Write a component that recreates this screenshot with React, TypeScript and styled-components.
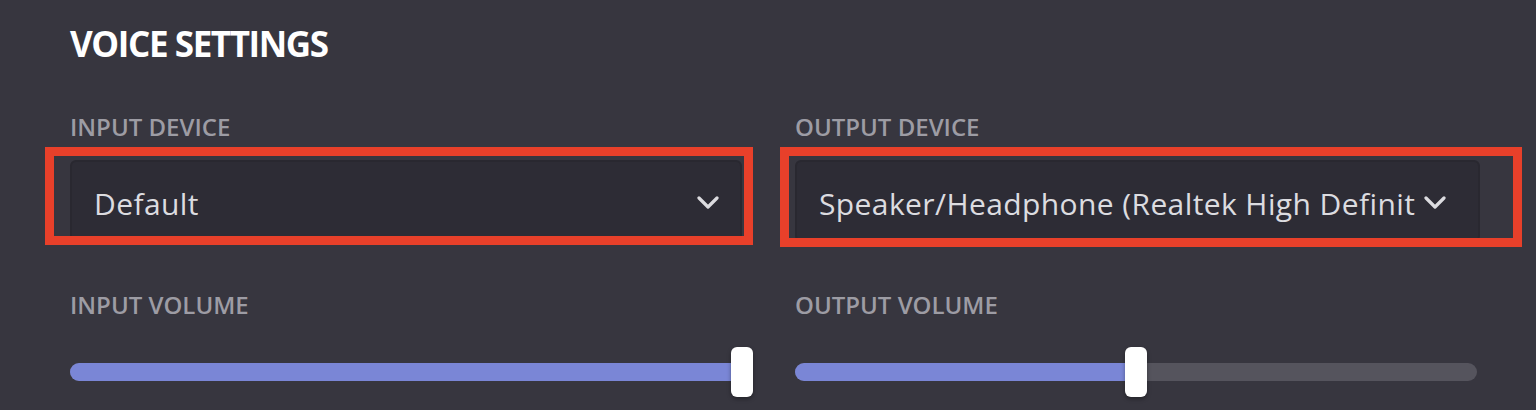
import React from "react";
import styled, { createGlobalStyle } from "styled-components";

const Global = createGlobalStyle`
  html, body { margin: 0; padding: 0; background: #37363f; }
  body { font-family: "Open Sans", "Noto Sans", sans-serif; overflow: hidden; }
`;

const Page = styled.div`
  width: 1536px;
  height: 410px;
  box-sizing: border-box;
  padding: 23px 0 0 70px;
  background: #37363f;
`;

const Heading = styled.h2`
  margin: 0;
  font-size: 35px;
  line-height: 42px;
  font-weight: 700;
  color: #ffffff;
  letter-spacing: -1.4px;
`;

const Grid = styled.div`
  margin-top: 47px;
  display: grid;
  grid-template-columns: 672px 685px;
  column-gap: 53px;
`;

const Column = styled.div`
  display: flex;
  flex-direction: column;
`;

const Label = styled.div<{ $gap?: number }>`
  font-size: 24px;
  line-height: 30px;
  font-weight: 600;
  color: #9d9ca4;
  text-transform: uppercase;
  letter-spacing: 0;
  margin-top: ${(p) => p.$gap ?? 0}px;
`;

const SelectWrap = styled.div`
  position: relative;
  margin-top: 18px;
`;

const Select = styled.div`
  height: 82px;
  box-sizing: border-box;
  display: flex;
  align-items: center;
  gap: 8px;
  padding: 4px 20px 0 22px;
  background: #2d2c35;
  border: 2px solid #292830;
  border-radius: 6px;
  color: #dcdce0;
  font-size: 30px;
  letter-spacing: 0.4px;
`;

const SelectText = styled.span<{ $grow?: boolean }>`
  flex: ${(p) => (p.$grow ? "1" : "0 1 auto")};
  min-width: 0;
  white-space: nowrap;
`;

const Highlight = styled.div<{ $l: number; $r: number; $t: number; $b: number }>`
  position: absolute;
  left: ${(p) => p.$l}px;
  right: ${(p) => p.$r}px;
  top: ${(p) => p.$t}px;
  bottom: ${(p) => p.$b}px;
  border: 9px solid #e8402a;
  pointer-events: none;
`;

const Slider = styled.div`
  position: relative;
  margin-top: 27px;
  height: 50px;
  display: flex;
  align-items: center;
`;

const Track = styled.div<{ $width: number }>`
  position: relative;
  width: ${(p) => p.$width}px;
  height: 18px;
  border-radius: 9px;
  background: #55545d;
  overflow: hidden;
`;

const Fill = styled.div`
  position: absolute;
  left: 0;
  top: 0;
  bottom: 0;
  background: #7a86d6;
`;

const Thumb = styled.div`
  position: absolute;
  top: 0;
  width: 22px;
  height: 50px;
  margin-left: -11px;
  background: #ffffff;
  border-radius: 6px;
  box-shadow: 0 2px 4px rgba(0, 0, 0, 0.35);
`;

const Chevron = () => (
  <svg width="24" height="14" viewBox="0 0 24 14" fill="none">
    <polyline
      points="3,2 12,11 21,2"
      stroke="#dcdce0"
      strokeWidth="3.2"
      strokeLinecap="round"
      strokeLinejoin="round"
    />
  </svg>
);

const VolumeSlider = ({ width, value }: { width: number; value: number }) => (
  <Slider>
    <Track $width={width}>
      <Fill style={{ width: `${value * 100}%` }} />
    </Track>
    <Thumb style={{ left: `${value * width}px` }} />
  </Slider>
);

export default function App() {
  return (
    <Page>
      <Global />
      <Heading>VOICE SETTINGS</Heading>
      <Grid>
        <Column>
          <Label>Input Device</Label>
          <SelectWrap>
            <Select>
              <SelectText $grow>Default</SelectText>
              <Chevron />
            </Select>
            <Highlight $l={-25} $r={-11} $t={-13} $b={-3} />
          </SelectWrap>
          <Label $gap={48}>Input Volume</Label>
          <VolumeSlider width={672} value={1} />
        </Column>
        <Column>
          <Label>Output Device</Label>
          <SelectWrap>
            <Select>
              <SelectText>Speaker/Headphone (Realtek High Definit</SelectText>
              <Chevron />
            </Select>
            <Highlight $l={-15} $r={-42} $t={-13} $b={-5} />
          </SelectWrap>
          <Label $gap={48}>Output Volume</Label>
          <VolumeSlider width={682} value={0.5} />
        </Column>
      </Grid>
    </Page>
  );
}
